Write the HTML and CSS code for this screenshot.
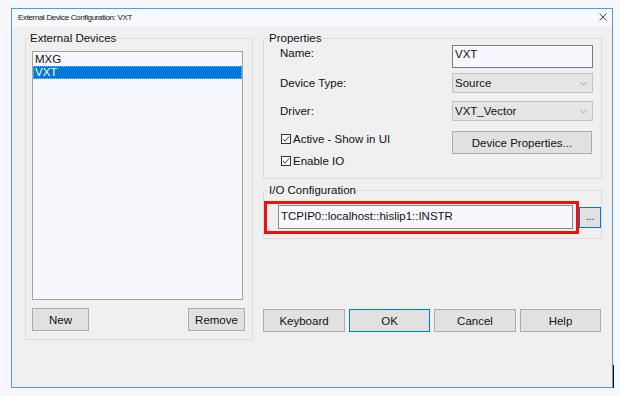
FILE: index.html
```html
<!DOCTYPE html>
<html>
<head>
<meta charset="utf-8">
<link rel="stylesheet" href="styles.css">
</head>
<body>
<div class="window">
  <div class="titlebar">
    <span class="title">External Device Configuration: VXT</span>
    <svg class="close" width="8" height="8" viewBox="0 0 8 8"><path d="M0.5 0.5L7.5 7.5M7.5 0.5L0.5 7.5" stroke="#333" stroke-width="0.9" fill="none"/></svg>
  </div>
  <div class="content">
    <fieldset class="group left-group">
      <legend>External Devices</legend>
      <div class="listbox">
        <div class="item">MXG</div>
        <div class="item selected">VXT</div>
      </div>
      <div class="left-buttons">
        <button class="btn w57">New</button>
        <button class="btn w57">Remove</button>
      </div>
    </fieldset>
    <div class="right-col">
      <fieldset class="group props">
        <legend>Properties</legend>
        <div class="prow first">
          <span class="plabel top">Name:</span>
          <div class="textbox">VXT</div>
        </div>
        <div class="prow combo-row">
          <span class="plabel">Device Type:</span>
          <div class="combo"><span>Source</span><svg width="7" height="5" viewBox="0 0 7 5"><path d="M0.5 1L3.5 4L6.5 1" stroke="#9a9a9a" fill="none"/></svg></div>
        </div>
        <div class="prow combo-row second">
          <span class="plabel">Driver:</span>
          <div class="combo"><span>VXT_Vector</span><svg width="7" height="5" viewBox="0 0 7 5"><path d="M0.5 1L3.5 4L6.5 1" stroke="#9a9a9a" fill="none"/></svg></div>
        </div>
        <div class="prow checks-row">
          <div class="checks">
            <div class="check"><span class="box"><svg width="8" height="8" viewBox="0 0 8 8"><path d="M1 4L3 6.2L7 1.5" stroke="#333" stroke-width="1" fill="none"/></svg></span>Active - Show in UI</div>
            <div class="check"><span class="box"><svg width="8" height="8" viewBox="0 0 8 8"><path d="M1 4L3 6.2L7 1.5" stroke="#333" stroke-width="1" fill="none"/></svg></span>Enable IO</div>
          </div>
          <button class="btn devprops">Device Properties...</button>
        </div>
      </fieldset>
      <fieldset class="group io">
        <legend>I/O Configuration</legend>
        <div class="io-row">
          <div class="highlight">
            <div class="iofield">TCPIP0::localhost::hislip1::INSTR</div>
          </div>
          <button class="btn dots">...</button>
        </div>
      </fieldset>
      <div class="bottom-buttons">
        <button class="btn w82">Keyboard</button>
        <button class="btn w81 default">OK</button>
        <button class="btn w82">Cancel</button>
        <button class="btn w81">Help</button>
      </div>
    </div>
  </div>
</div>
<div class="cursor-mark"></div>
</body>
</html>
```

FILE: styles.css
```css
html, body {
  margin: 0;
  padding: 0;
}
body {
  background: #f7f7fd;
  font-family: "Liberation Sans", Arial, sans-serif;
  font-size: 11.5px;
  color: #111;
  padding: 8px 0 0 11px;
  width: 620px;
  height: 396px;
  box-sizing: border-box;
  position: relative;
  overflow: hidden;
}
.window {
  width: 602px;
  height: 380px;
  box-sizing: border-box;
  border: 1px solid #4d9fe3;
  background: #f0f0f0;
  display: flex;
  flex-direction: column;
}
.titlebar {
  height: 17px;
  flex: none;
  background: #f8f8fe;
  display: flex;
  align-items: center;
  justify-content: space-between;
  padding: 0 5px 0 6px;
}
.title {
  font-size: 8px;
  letter-spacing: -0.35px;
  line-height: 10px;
}
.close {
  display: block;
  margin-top: -1px;
}
.content {
  flex: 1;
  display: flex;
  align-items: flex-start;
  gap: 10px;
  padding: 5px 10px 0 13px;
}
.group {
  margin: 0;
  padding: 0;
  border: 1px solid #dcdcdc;
  box-sizing: border-box;
  min-width: 0;
}
.group legend {
  padding: 0 1px;
  margin-left: 4px;
  line-height: 14px;
  font-size: 11.5px;
}
.left-group {
  width: 228px;
}
.left-group legend {
  margin-left: 3px;
}
.listbox {
  margin: 6px 0 0 6px;
  width: 211px;
  height: 249px;
  box-sizing: border-box;
  border: 1px solid #a3a3a3;
  background: #f7f7fe;
  padding-top: 1px;
}
.item {
  height: 13px;
  line-height: 13px;
  padding-left: 2px;
}
.item.selected {
  background: #0078d7;
  color: #fff;
  outline: 1px dotted #8ec0f0;
  outline-offset: -1px;
}
.left-buttons {
  display: flex;
  justify-content: space-between;
  margin: 8px 7px 8px 6px;
}
.btn {
  height: 23px;
  box-sizing: border-box;
  border: 1px solid #adadad;
  background: #e1e1e1;
  font-family: "Liberation Sans", Arial, sans-serif;
  font-size: 11.5px;
  color: #111;
  padding: 0;
  margin: 0;
  display: flex;
  align-items: center;
  justify-content: center;
}
.w57 { width: 57px; }
.w81 { width: 81px; }
.w82 { width: 82px; }
.btn.default {
  border-color: #0078d7;
}
.right-col {
  width: 339px;
  height: 309px;
  display: flex;
  flex-direction: column;
}
.props {
  width: 339px;
  padding-bottom: 10px;
}
.prow {
  display: flex;
  align-items: center;
  padding-left: 16px;
}
.prow.first {
  align-items: flex-start;
  height: 23px;
}
.plabel {
  width: 172px;
  flex: none;
  line-height: 14px;
}
.plabel.top {
  padding-top: 1px;
}
.textbox {
  width: 141px;
  height: 23px;
  box-sizing: border-box;
  border: 1px solid #7a7a7a;
  background: #f7f7fe;
  padding: 1px 2px;
  line-height: 14px;
}
.combo-row {
  margin-top: 5px;
}
.combo-row.second {
  margin-top: 8px;
}
.combo {
  width: 141px;
  height: 20px;
  box-sizing: border-box;
  border: 1px solid #c2c2c2;
  background: #e5e5e5;
  display: flex;
  align-items: center;
  justify-content: space-between;
  padding: 0 5px 0 2px;
}
.combo svg {
  display: block;
}
.checks-row {
  align-items: flex-start;
  margin-top: 10px;
}
.checks {
  width: 171px;
  margin-left: 1px;
  margin-top: 1px;
  display: flex;
  flex-direction: column;
  gap: 8px;
}
.check {
  display: flex;
  align-items: center;
  line-height: 14px;
}
.box {
  width: 10px;
  height: 10px;
  box-sizing: border-box;
  border: 1px solid #333;
  background: #fff;
  margin-right: 2px;
  display: flex;
  align-items: center;
  justify-content: center;
}
.box svg {
  display: block;
}
.devprops {
  width: 140px;
}
.io {
  width: 339px;
  margin-top: 4px;
  padding-bottom: 4px;
}
.io-row {
  display: flex;
  align-items: center;
  margin-top: 4px;
}
.highlight {
  width: 315px;
  box-sizing: border-box;
  border: 3px solid #ee1111;
  padding: 1px 3px 2px 11px;
}
.iofield {
  height: 24px;
  box-sizing: border-box;
  border: 1px solid #8a8a8a;
  background: #f7f7fe;
  padding: 3px 2px 0 2px;
  line-height: 14px;
}
.btn.dots {
  width: 22px;
  height: 21px;
  margin-left: 0;
  border-color: #0078d7;
  font-size: 10px;
  align-items: flex-end;
  padding-bottom: 5px;
}
.bottom-buttons {
  margin-top: auto;
  margin-bottom: 8px;
  display: flex;
  gap: 4px;
}
.cursor-mark {
  position: absolute;
  left: 613px;
  top: 365px;
  width: 1px;
  height: 23px;
  background: #000;
}
```
